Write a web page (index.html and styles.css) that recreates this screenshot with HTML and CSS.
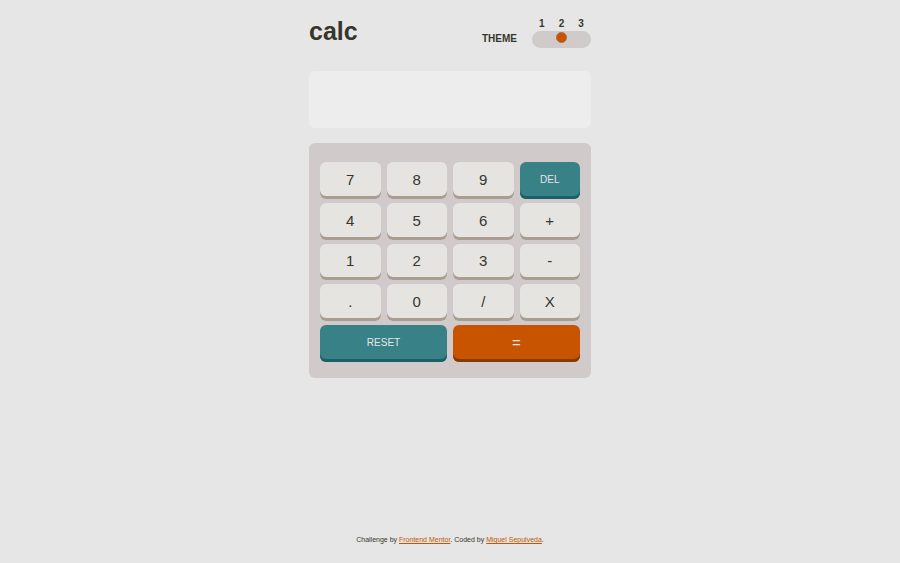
FILE: index.html
```html
<!DOCTYPE html>
<html lang="en">
<head>
  <meta charset="utf-8">
  <meta name="viewport" content="width=device-width, initial-scale=1">
  <title>Calculator</title>
  <link rel="stylesheet" href="styles.css">
</head>
<body>
  <main class="calculator">
    <header class="header">
      <h1 class="title">calc</h1>
      <div class="theme">
        <label class="theme-label" for="theme">THEME</label>
        <div class="switch">
          <div class="switch-numbers"><span>1</span><span>2</span><span>3</span></div>
          <input class="switch-range" id="theme" type="range" min="1" max="3" value="2">
        </div>
      </div>
    </header>
    <input class="display" type="text" aria-label="Result" readonly>
    <div class="keypad">
      <button class="key" type="button">7</button>
      <button class="key" type="button">8</button>
      <button class="key" type="button">9</button>
      <button class="key key-action" type="button">DEL</button>
      <button class="key" type="button">4</button>
      <button class="key" type="button">5</button>
      <button class="key" type="button">6</button>
      <button class="key" type="button">+</button>
      <button class="key" type="button">1</button>
      <button class="key" type="button">2</button>
      <button class="key" type="button">3</button>
      <button class="key" type="button">-</button>
      <button class="key" type="button">.</button>
      <button class="key" type="button">0</button>
      <button class="key" type="button">/</button>
      <button class="key" type="button">X</button>
      <button class="key key-action key-wide" type="button">RESET</button>
      <button class="key key-equals key-wide" type="button">=</button>
    </div>
  </main>
  <footer class="footer">
    Challenge by <a href="#">Frontend Mentor</a>. Coded by <a href="#">Miguel Sepulveda</a>.
  </footer>
</body>
</html>
```
FILE: styles.css
```css
* {
  box-sizing: border-box;
}

body {
  display: flex;
  flex-direction: column;
  align-items: center;
  justify-content: space-between;
  min-height: 100vh;
  margin: 0;
  padding: 16px 0;
  background: #e6e6e6;
  color: #36362c;
  font-family: "Liberation Sans", Arial, sans-serif;
}

.calculator {
  display: flex;
  flex-direction: column;
  width: 100%;
  max-width: 282px;
}

.header {
  display: flex;
  justify-content: space-between;
  align-items: flex-start;
  margin-bottom: 23px;
}

.title {
  margin: 0;
  font-size: 25px;
  line-height: 30px;
}

.theme {
  display: flex;
  align-items: flex-end;
  gap: 15px;
  font-size: 10px;
  font-weight: bold;
}

.theme-label {
  line-height: 18px;
}

.switch {
  display: flex;
  flex-direction: column;
  width: 59px;
}

.switch-numbers {
  display: flex;
  justify-content: space-around;
  line-height: 15px;
}

.switch-range {
  appearance: none;
  width: 100%;
  height: 17px;
  margin: 0;
  padding: 0 0 5px;
  border-radius: 9px;
  background: #d0cbca;
}

.switch-range::-webkit-slider-thumb {
  appearance: none;
  width: 11px;
  height: 11px;
  border: 1px solid #b5683a;
  border-radius: 50%;
  background: #c85402;
}

.display {
  height: 57px;
  margin: 0 0 15px;
  padding: 0 16px;
  border: 0;
  border-radius: 6px;
  background: #ededed;
  color: inherit;
  font: bold 25px "Liberation Sans", Arial, sans-serif;
  text-align: right;
}

.keypad {
  display: grid;
  grid-template-columns: repeat(4, 1fr);
  grid-template-rows: repeat(5, 1fr);
  gap: 4px 6px;
  height: 235px;
  padding: 19px 11px 16px;
  border-radius: 6px;
  background: #d0cbca;
}

.key {
  padding: 0 0 2px;
  border: 0;
  border-radius: 6px;
  background: #e5e4e0;
  box-shadow: inset 0 -3px #a79e91;
  color: #36362c;
  font: 15px "Liberation Sans", Arial, sans-serif;
}

.key-action {
  background: #388187;
  box-shadow: inset 0 -3px #1b6066;
  color: #e6e6e6;
  font-size: 10px;
}

.key-equals {
  background: #c85402;
  box-shadow: inset 0 -3px #873901;
  color: #e6e6e6;
}

.key-wide {
  grid-column: span 2;
}

.footer {
  font-size: 7px;
  line-height: 15px;
  text-align: center;
}

.footer a {
  color: #c85402;
}
```
